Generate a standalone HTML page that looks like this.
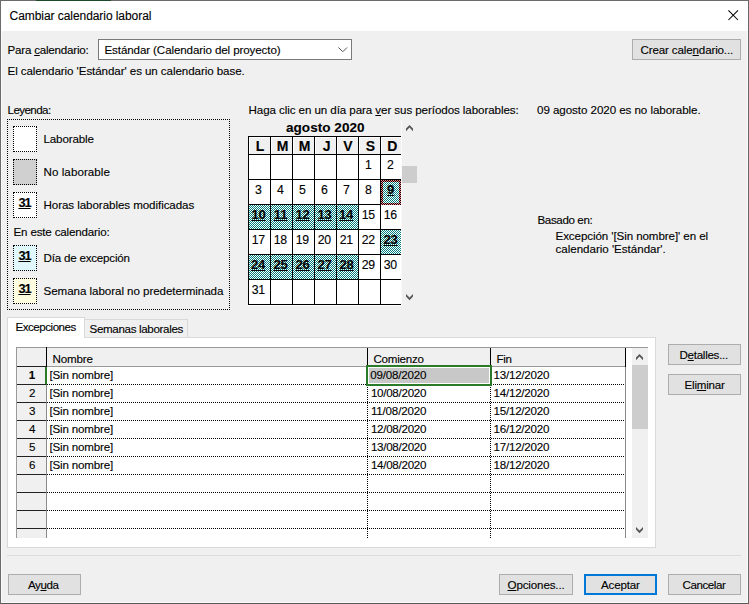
<!DOCTYPE html>
<html lang="es">
<head>
<meta charset="utf-8">
<title>Cambiar calendario laboral</title>
<style>
html,body{margin:0;padding:0}
body{width:749px;height:604px;position:relative;overflow:hidden;background:#f0f0f0;font-family:"Liberation Sans",sans-serif;font-size:12px;color:#000}
div,span,svg{position:absolute;box-sizing:border-box}
.t{white-space:nowrap;line-height:1;font-size:11.6px;-webkit-text-stroke:0.12px #000}
.t u{text-decoration:underline;text-underline-offset:1px;text-decoration-thickness:1px}
.btn{background:#e1e1e1;border:1px solid #adadad;height:21px}
.btn.def{border:2px solid #0078d7}
.sw{left:13px;width:24px;height:26px;border:1px dotted #000;background:#fff}
.hl{height:1px;background:#000}
.vl{width:1px;background:#000}
.hd{height:17px;width:21px;background:#f0f0f0;border-top:1px solid #fff;border-left:1px solid #fff}
.ex{background:repeating-conic-gradient(#008080 0% 25%,#fff 0% 50%) 0 0/2px 2px}
.dot-h{height:1px;background:repeating-linear-gradient(90deg,#000 0 1px,transparent 1px 2px)}
.dot-v{width:1px;background:repeating-linear-gradient(180deg,#000 0 1px,transparent 1px 2px)}
.rh{left:17px;width:29px;height:1px;background:#222}

</style>
</head>
<body>
<!-- window frame -->
<div style="left:0;top:0;width:749px;height:604px;border:1px solid #6b6b6b;border-right-color:#666;border-bottom-color:#5a5a5a"></div>
<div style="left:1px;top:1px;width:747px;height:602px;border:1px solid #fafafa;border-top:none"></div>
<div style="left:1px;top:1px;width:747px;height:30px;background:#fff"></div>
<div style="left:36px;top:0;width:75px;height:1px;background:#1d4a2a"></div>
<svg style="left:727px;top:9px" width="13" height="13" viewBox="0 0 13 13"><path d="M1.4 1.4 L11 11 M11 1.4 L1.4 11" stroke="#000" stroke-width="1.05" fill="none"/></svg>

<!-- combo -->
<div style="left:98px;top:39px;width:254px;height:21px;background:#fff;border:1px solid #7a7a7a"></div>
<svg style="left:337px;top:45px" width="12" height="9" viewBox="0 0 12 9"><path d="M1.5 2.5 L5.75 6.75 L10 2.5" stroke="#505050" stroke-width="1" fill="none"/></svg>
<div class="btn" style="left:632px;top:39px;width:109px"></div>

<!-- legend -->
<div style="left:7px;top:119px;width:223px;height:191px;border:1px dotted #000"></div>
<div class="sw" style="top:126px"></div>
<div class="sw" style="top:159px;background:#d0d0d0"></div>
<div class="sw" style="top:192px"></div>
<div class="sw" style="top:245px;background:#e0f8fc"></div>
<div class="sw" style="top:278px;background:#fffde0"></div>

<!-- calendar -->
<div id="cal" style="left:248px;top:136px;width:153px;height:170px;overflow:hidden;background:#fff">
<div class="hd" style="left:1px;top:1px"></div>
<div class="hd" style="left:23px;top:1px"></div>
<div class="hd" style="left:45px;top:1px"></div>
<div class="hd" style="left:67px;top:1px"></div>
<div class="hd" style="left:89px;top:1px"></div>
<div class="hd" style="left:111px;top:1px"></div>
<div class="hd" style="left:133px;top:1px"></div>
<div class="ex" style="left:1px;top:69px;width:21px;height:24px"></div>
<div class="ex" style="left:23px;top:69px;width:21px;height:24px"></div>
<div class="ex" style="left:45px;top:69px;width:21px;height:24px"></div>
<div class="ex" style="left:67px;top:69px;width:21px;height:24px"></div>
<div class="ex" style="left:89px;top:69px;width:21px;height:24px"></div>
<div class="ex" style="left:133px;top:94px;width:21px;height:24px"></div>
<div class="ex" style="left:1px;top:119px;width:21px;height:24px"></div>
<div class="ex" style="left:23px;top:119px;width:21px;height:24px"></div>
<div class="ex" style="left:45px;top:119px;width:21px;height:24px"></div>
<div class="ex" style="left:67px;top:119px;width:21px;height:24px"></div>
<div class="ex" style="left:89px;top:119px;width:21px;height:24px"></div>
<div class="vl" style="left:0px;top:0;height:169px"></div>
<div class="vl" style="left:22px;top:0;height:169px"></div>
<div class="vl" style="left:44px;top:0;height:169px"></div>
<div class="vl" style="left:66px;top:0;height:169px"></div>
<div class="vl" style="left:88px;top:0;height:169px"></div>
<div class="vl" style="left:110px;top:0;height:169px"></div>
<div class="vl" style="left:132px;top:0;height:169px"></div>
<div class="hl" style="left:0;top:0px;width:153px"></div>
<div class="hl" style="left:0;top:18px;width:153px"></div>
<div class="hl" style="left:0;top:43px;width:153px"></div>
<div class="hl" style="left:0;top:68px;width:153px"></div>
<div class="hl" style="left:0;top:93px;width:153px"></div>
<div class="hl" style="left:0;top:118px;width:153px"></div>
<div class="hl" style="left:0;top:143px;width:153px"></div>
<div class="hl" style="left:0;top:168px;width:153px"></div>
<div style="left:133px;top:44px;width:20px;height:25px;background:repeating-conic-gradient(#000 0% 25%,#ff8080 0% 50%) 0 0/2px 2px"></div>
<div class="ex" style="left:135px;top:46px;width:16px;height:21px"></div>
</div>
<!-- calendar scrollbar -->
<div style="left:401px;top:120px;width:1px;height:186px;background:#fafafa"></div>
<div style="left:402px;top:166px;width:15px;height:17px;background:#cdcdcd"></div>
<svg style="left:404px;top:123px" width="12" height="10" viewBox="404 123 12 10"><polygon points="406,128.6 409.5,125 413,128.6 413,131.2 409.5,127.6 406,131.2" fill="#555"/></svg>
<svg style="left:404px;top:292px" width="12" height="10" viewBox="404 292 12 10"><polygon points="406,294 409.5,297.6 413,294 413,296.6 409.5,300.2 406,296.6" fill="#555"/></svg>

<!-- tabs -->
<div style="left:7px;top:337px;width:649px;height:211px;background:#fff;border:1px solid #d9d9d9"></div>
<div style="left:84px;top:319px;width:104px;height:19px;background:#f0f0f0;border:1px solid #d9d9d9;border-left:none"></div>
<div style="left:7px;top:317px;width:78px;height:21px;background:#fff;border:1px solid #d9d9d9;border-bottom:none"></div>

<!-- table -->
<div id="tbl" style="left:16px;top:347px;width:640px;height:191px;overflow:hidden">
<div style="left:0;top:0;width:610px;height:191px;background:#fff"></div>
<div style="left:0;top:0;width:610px;height:20px;background:#f0f0f0"></div>
<div style="left:0;top:20px;width:31px;height:171px;background:#f0f0f0"></div>
<div style="left:0;top:0;width:632px;height:1px;background:#999"></div>
<div style="left:31px;top:19px;width:579px;height:1px;background:#999"></div>
<div style="left:0;top:0;width:1px;height:191px;background:#999"></div>
<div style="left:30px;top:0;width:1px;height:20px;background:#000"></div>
<div style="left:29px;top:20px;width:2px;height:18px;background:#2a7a2a"></div>
<div style="left:30px;top:38px;width:1px;height:153px;background:#8a8a8a"></div>
<div style="left:351px;top:1px;width:1px;height:19px;background:#000"></div>
<div class="dot-v" style="left:351px;top:20px;height:171px"></div>
<div style="left:474px;top:1px;width:1px;height:19px;background:#000"></div>
<div class="dot-v" style="left:474px;top:20px;height:171px"></div>
<div style="left:609px;top:1px;width:1px;height:19px;background:#000"></div>
<div style="left:609px;top:20px;width:1px;height:171px;background:#888"></div>
<div class="rh" style="left:1px;top:19px"></div>
<div class="rh" style="left:1px;top:37px"></div>
<div class="dot-h" style="left:31px;top:37px;width:578px"></div>
<div class="rh" style="left:1px;top:55px"></div>
<div class="dot-h" style="left:31px;top:55px;width:578px"></div>
<div class="rh" style="left:1px;top:73px"></div>
<div class="dot-h" style="left:31px;top:73px;width:578px"></div>
<div class="rh" style="left:1px;top:91px"></div>
<div class="dot-h" style="left:31px;top:91px;width:578px"></div>
<div class="rh" style="left:1px;top:109px"></div>
<div class="dot-h" style="left:31px;top:109px;width:578px"></div>
<div class="rh" style="left:1px;top:127px"></div>
<div class="dot-h" style="left:31px;top:127px;width:578px"></div>
<div class="rh" style="left:1px;top:145px"></div>
<div class="dot-h" style="left:31px;top:145px;width:578px"></div>
<div class="rh" style="left:1px;top:163px"></div>
<div class="dot-h" style="left:31px;top:163px;width:578px"></div>
<div class="rh" style="left:1px;top:181px"></div>
<div class="dot-h" style="left:31px;top:181px;width:578px"></div>
<div style="left:350px;top:18px;width:126px;height:21px;background:#fff;border:2px solid #2a7a2a"></div>
<div style="left:353px;top:21px;width:120px;height:15px;background:#c8c8c8"></div>
<div style="left:616px;top:1px;width:16px;height:190px;background:#f0f0f0"></div>
<div style="left:616px;top:18px;width:16px;height:64px;background:#cdcdcd"></div>
<svg style="left:618px;top:5px" width="12" height="10" viewBox="618 5 12 10"><polygon points="620,10.6 623.5,7 627,10.6 627,13.2 623.5,9.6 620,13.2" fill="#555"/></svg>
<svg style="left:618px;top:178px" width="12" height="10" viewBox="618 178 12 10"><polygon points="620,180 623.5,183.6 627,180 627,182.6 623.5,186.2 620,182.6" fill="#555"/></svg>
</div>

<!-- buttons -->
<div class="btn" style="left:668px;top:344px;width:73px"></div>
<div class="btn" style="left:668px;top:374px;width:73px"></div>
<div style="left:7px;top:555px;width:734px;height:1px;background:#dcdcdc"></div>
<div class="btn" style="left:8px;top:574px;width:73px"></div>
<div class="btn" style="left:499px;top:574px;width:74px"></div>
<div class="btn def" style="left:584px;top:574px;width:73px"></div>
<div class="btn" style="left:668px;top:574px;width:73px"></div>

<span class="t" style="left:9.60px;top:10.00px;font-size:12px;letter-spacing:-0.064px;">Cambiar calendario laboral</span>
<span class="t" style="left:7.50px;top:44.00px;letter-spacing:-0.214px;">Para <u>c</u>alendario:</span>
<span class="t" style="left:104.50px;top:44.00px;letter-spacing:-0.112px;">Estándar (Calendario del proyecto)</span>
<span class="t" style="left:7.50px;top:65.00px;letter-spacing:-0.081px;">El calendario 'Estándar' es un calendario base.</span>
<span class="t" style="left:640.50px;top:44.00px;letter-spacing:-0.147px;">Crear cale<u>n</u>dario...</span>
<span class="t" style="left:7.50px;top:104.00px;letter-spacing:-0.569px;">Leyenda:</span>
<span class="t" style="left:248.50px;top:104.00px;letter-spacing:-0.083px;">Haga clic en un día para <u>v</u>er sus períodos laborables:</span>
<span class="t" style="left:537.00px;top:104.00px;letter-spacing:-0.065px;">09 agosto 2020 es no laborable.</span>
<span class="t" style="left:43.50px;top:133.00px;letter-spacing:-0.140px;">Laborable</span>
<span class="t" style="left:43.50px;top:166.00px;letter-spacing:0.064px;">No laborable</span>
<span class="t" style="left:43.50px;top:199.00px;letter-spacing:-0.072px;">Horas laborables modificadas</span>
<span class="t" style="left:13.50px;top:226.00px;letter-spacing:-0.169px;">En este calendario:</span>
<span class="t" style="left:43.50px;top:252.00px;letter-spacing:-0.209px;">Día de excepción</span>
<span class="t" style="left:43.50px;top:285.00px;letter-spacing:-0.058px;">Semana laboral no predeterminada</span>
<span class="t" style="left:537.50px;top:214.00px;letter-spacing:-0.382px;">Basado en:</span>
<span class="t" style="left:555.50px;top:230.00px;letter-spacing:-0.092px;">Excepción '[Sin nombre]' en el</span>
<span class="t" style="left:555.50px;top:243.00px;letter-spacing:-0.026px;">calendario 'Estándar'.</span>
<span class="t" style="left:15.50px;top:321.00px;letter-spacing:-0.494px;">Excepciones</span>
<span class="t" style="left:89.50px;top:323.00px;letter-spacing:-0.341px;">Semanas laborales</span>
<span class="t" style="left:52.50px;top:353.00px;letter-spacing:-0.157px;">Nombre</span>
<span class="t" style="left:373.50px;top:353.00px;letter-spacing:-0.250px;">Comienzo</span>
<span class="t" style="left:496.50px;top:353.00px;letter-spacing:-0.329px;">Fin</span>
<span class="t" style="left:49.50px;top:369.00px;letter-spacing:-0.183px;">[Sin nombre]</span>
<span class="t" style="left:370.30px;top:369.00px;letter-spacing:-0.209px;">09/08/2020</span>
<span class="t" style="left:493.50px;top:369.00px;letter-spacing:-0.231px;">13/12/2020</span>
<span class="t" style="left:28.80px;top:369.00px;font-weight:bold;">1</span>
<span class="t" style="left:49.50px;top:387.00px;letter-spacing:-0.183px;">[Sin nombre]</span>
<span class="t" style="left:370.90px;top:387.00px;letter-spacing:-0.275px;">10/08/2020</span>
<span class="t" style="left:493.50px;top:387.00px;letter-spacing:-0.231px;">14/12/2020</span>
<span class="t" style="left:29.00px;top:387.00px;">2</span>
<span class="t" style="left:49.50px;top:405.00px;letter-spacing:-0.183px;">[Sin nombre]</span>
<span class="t" style="left:370.90px;top:405.00px;letter-spacing:-0.180px;">11/08/2020</span>
<span class="t" style="left:493.50px;top:405.00px;letter-spacing:-0.231px;">15/12/2020</span>
<span class="t" style="left:29.00px;top:405.00px;">3</span>
<span class="t" style="left:49.50px;top:423.00px;letter-spacing:-0.183px;">[Sin nombre]</span>
<span class="t" style="left:370.90px;top:423.00px;letter-spacing:-0.275px;">12/08/2020</span>
<span class="t" style="left:493.50px;top:423.00px;letter-spacing:-0.231px;">16/12/2020</span>
<span class="t" style="left:29.00px;top:423.00px;">4</span>
<span class="t" style="left:49.50px;top:441.00px;letter-spacing:-0.183px;">[Sin nombre]</span>
<span class="t" style="left:370.90px;top:441.00px;letter-spacing:-0.275px;">13/08/2020</span>
<span class="t" style="left:493.50px;top:441.00px;letter-spacing:-0.231px;">17/12/2020</span>
<span class="t" style="left:29.00px;top:441.00px;">5</span>
<span class="t" style="left:49.50px;top:459.00px;letter-spacing:-0.183px;">[Sin nombre]</span>
<span class="t" style="left:370.90px;top:459.00px;letter-spacing:-0.275px;">14/08/2020</span>
<span class="t" style="left:493.50px;top:459.00px;letter-spacing:-0.231px;">18/12/2020</span>
<span class="t" style="left:29.00px;top:459.00px;">6</span>
<span class="t" style="left:679.50px;top:349.00px;letter-spacing:-0.283px;">D<u>e</u>talles...</span>
<span class="t" style="left:684.50px;top:379.00px;letter-spacing:-0.216px;">Eli<u>m</u>inar</span>
<span class="t" style="left:28.00px;top:579.00px;letter-spacing:-0.429px;">Ay<u>u</u>da</span>
<span class="t" style="left:507.50px;top:579.00px;letter-spacing:-0.142px;"><u>O</u>pciones...</span>
<span class="t" style="left:601.00px;top:579.00px;letter-spacing:-0.182px;">Aceptar</span>
<span class="t" style="left:682.50px;top:579.00px;letter-spacing:-0.434px;">Cancelar</span>
<span class="t" style="left:18.40px;top:196.80px;font-size:12.8px;font-weight:bold;letter-spacing:-1.017px;"><u>31</u></span>
<span class="t" style="left:18.40px;top:249.80px;font-size:12.8px;font-weight:bold;letter-spacing:-1.017px;"><u>31</u></span>
<span class="t" style="left:18.40px;top:282.80px;font-size:12.8px;font-weight:bold;letter-spacing:-1.017px;"><u>31</u></span>
<span class="t" style="left:286.00px;top:121.00px;font-size:13.5px;font-weight:bold;letter-spacing:0.047px;">agosto 2020</span>
<span class="t" style="left:255.70px;top:139.00px;font-size:14px;font-weight:bold;">L</span>
<span class="t" style="left:276.70px;top:139.00px;font-size:14px;font-weight:bold;">M</span>
<span class="t" style="left:298.70px;top:139.00px;font-size:14px;font-weight:bold;">M</span>
<span class="t" style="left:322.70px;top:139.00px;font-size:14px;font-weight:bold;">J</span>
<span class="t" style="left:343.20px;top:139.00px;font-size:14px;font-weight:bold;">V</span>
<span class="t" style="left:365.70px;top:139.00px;font-size:14px;font-weight:bold;">S</span>
<span class="t" style="left:387.20px;top:139.00px;font-size:14px;font-weight:bold;">D</span>
<span class="t" style="left:365.00px;top:158.90px;font-size:12.3px;">1</span>
<span class="t" style="left:387.00px;top:158.90px;font-size:12.3px;">2</span>
<span class="t" style="left:255.00px;top:183.90px;font-size:12.3px;">3</span>
<span class="t" style="left:277.00px;top:183.90px;font-size:12.3px;">4</span>
<span class="t" style="left:299.00px;top:183.90px;font-size:12.3px;">5</span>
<span class="t" style="left:321.00px;top:183.90px;font-size:12.3px;">6</span>
<span class="t" style="left:343.00px;top:183.90px;font-size:12.3px;">7</span>
<span class="t" style="left:365.00px;top:183.90px;font-size:12.3px;">8</span>
<span class="t" style="left:387.00px;top:182.80px;font-size:13.2px;font-weight:bold;"><u>9</u></span>
<span class="t" style="left:251.43px;top:207.80px;font-size:13.2px;font-weight:bold;letter-spacing:-0.200px;"><u>10</u></span>
<span class="t" style="left:273.80px;top:207.80px;font-size:13.2px;font-weight:bold;letter-spacing:-0.200px;"><u>11</u></span>
<span class="t" style="left:295.43px;top:207.80px;font-size:13.2px;font-weight:bold;letter-spacing:-0.200px;"><u>12</u></span>
<span class="t" style="left:317.43px;top:207.80px;font-size:13.2px;font-weight:bold;letter-spacing:-0.200px;"><u>13</u></span>
<span class="t" style="left:338.93px;top:207.80px;font-size:13.2px;font-weight:bold;letter-spacing:-0.200px;"><u>14</u></span>
<span class="t" style="left:361.78px;top:208.90px;font-size:12.3px;letter-spacing:-0.400px;">15</span>
<span class="t" style="left:383.78px;top:208.90px;font-size:12.3px;letter-spacing:-0.400px;">16</span>
<span class="t" style="left:251.78px;top:233.90px;font-size:12.3px;letter-spacing:-0.400px;">17</span>
<span class="t" style="left:273.78px;top:233.90px;font-size:12.3px;letter-spacing:-0.400px;">18</span>
<span class="t" style="left:295.78px;top:233.90px;font-size:12.3px;letter-spacing:-0.400px;">19</span>
<span class="t" style="left:317.78px;top:233.90px;font-size:12.3px;letter-spacing:-0.400px;">20</span>
<span class="t" style="left:339.78px;top:233.90px;font-size:12.3px;letter-spacing:-0.400px;">21</span>
<span class="t" style="left:361.78px;top:233.90px;font-size:12.3px;letter-spacing:-0.400px;">22</span>
<span class="t" style="left:383.43px;top:232.80px;font-size:13.2px;font-weight:bold;letter-spacing:-0.200px;"><u>23</u></span>
<span class="t" style="left:250.93px;top:257.80px;font-size:13.2px;font-weight:bold;letter-spacing:-0.200px;"><u>24</u></span>
<span class="t" style="left:273.43px;top:257.80px;font-size:13.2px;font-weight:bold;letter-spacing:-0.200px;"><u>25</u></span>
<span class="t" style="left:295.43px;top:257.80px;font-size:13.2px;font-weight:bold;letter-spacing:-0.200px;"><u>26</u></span>
<span class="t" style="left:317.43px;top:257.80px;font-size:13.2px;font-weight:bold;letter-spacing:-0.200px;"><u>27</u></span>
<span class="t" style="left:339.43px;top:257.80px;font-size:13.2px;font-weight:bold;letter-spacing:-0.200px;"><u>28</u></span>
<span class="t" style="left:361.78px;top:258.90px;font-size:12.3px;letter-spacing:-0.400px;">29</span>
<span class="t" style="left:383.78px;top:258.90px;font-size:12.3px;letter-spacing:-0.400px;">30</span>
<span class="t" style="left:251.78px;top:283.90px;font-size:12.3px;letter-spacing:-0.400px;">31</span>
</body>
</html>
